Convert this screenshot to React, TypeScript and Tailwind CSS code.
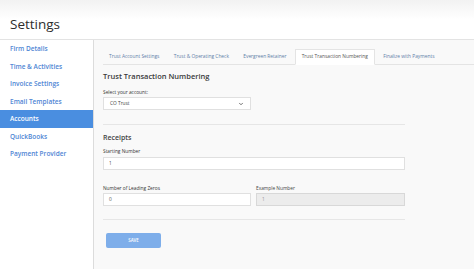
import { ChevronDown } from 'lucide-react'

const navItems = [
    'Firm Details',
    'Time & Activities',
    'Invoice Settings',
    'Email Templates',
    'Accounts',
    'QuickBooks',
    'Payment Provider',
]

const tabs = [
    'Trust Account Settings',
    'Trust & Operating Check',
    'Evergreen Retainer',
    'Trust Transaction Numbering',
    'Finalize with Payments',
]

export default function App() {
    return (
        <div className="w-[474px] h-[269px] overflow-hidden bg-white text-[#333] flex flex-col" style={{ fontFamily: '"Open Sans", "Noto Sans", sans-serif' }}>
            <header className="h-[40px] shrink-0 border-b border-[#e3e3e3] flex items-center pt-[9px] pl-[10px] bg-gradient-to-b from-[#f2f2f2] via-white to-white">
                <h1 className="text-[13.5px] leading-[18px] text-[#2d2d2d]">Settings</h1>
            </header>

            <div className="flex flex-1 min-h-0">
                <nav className="w-[94px] shrink-0 border-r border-[#dcdcdc] bg-white">
                    {navItems.map(item => (
                        <div
                            key={item}
                            className={
                                item === 'Accounts'
                                    ? 'h-[17.6px] flex items-center pl-[10px] text-[6.5px] font-semibold bg-[#4a8ee0] text-white'
                                    : 'h-[17.6px] flex items-center pl-[10px] text-[6.5px] font-semibold text-[#4f86d4]'
                            }
                        >
                            {item}
                        </div>
                    ))}
                </nav>

                <main className="flex-1 bg-[#f9f9f9] pl-[9px] pt-[9px]">
                    <div className="h-[16px] flex border-b border-[#e4e4e4]">
                        {tabs.map(tab => (
                            <div
                                key={tab}
                                className={
                                    tab === 'Trust Transaction Numbering'
                                        ? 'h-[16px] -mb-px px-[6px] mr-[2.3px] flex items-center text-[4.85px] text-[#555] bg-white border border-[#e4e4e4] border-b-white'
                                        : 'h-[16px] px-[6px] mr-[2.3px] flex items-center text-[4.85px] text-[#5f80a8]'
                                }
                            >
                                {tab}
                            </div>
                        ))}
                    </div>

                    <div className="w-[302px]">
                        <h2 className="mt-[5px] text-[7.5px] leading-[12px] font-semibold text-[#3a3a3a]">Trust Transaction Numbering</h2>
                        <div className="mt-[6px] text-[4.8px] leading-[8px] text-[#333]">Select your account:</div>
                        <div className="mt-[1px] w-[148px] h-[13px] bg-white border border-[#e0e0e0] flex items-center justify-between pl-[6px] pr-[6px]">
                            <span className="text-[4.8px] text-[#444]">CO Trust</span>
                            <ChevronDown size={6} strokeWidth={3} className="text-[#444]" />
                        </div>

                        <div className="mt-[14px] border-t border-[#e6e6e6]" />

                        <h3 className="mt-[7px] text-[7px] leading-[12px] font-semibold text-[#444]">Receipts</h3>
                        <div className="mt-[3px] text-[4.8px] leading-[8px]">Starting Number</div>
                        <div className="mt-[2px] h-[13px] bg-white border border-[#e0e0e0] flex items-center pl-[5px] text-[4.8px] text-[#555]">1</div>

                        <div className="mt-[14px] flex gap-[5px]">
                            <div className="w-[148px]">
                                <div className="text-[4.8px] leading-[8px]">Number of Leading Zeros</div>
                                <div className="mt-[1px] h-[13px] bg-white border border-[#e0e0e0] flex items-center pl-[5px] text-[4.8px] text-[#555]">0</div>
                            </div>
                            <div className="flex-1">
                                <div className="text-[4.8px] leading-[8px] text-[#444]">Example Number</div>
                                <div className="mt-[1px] h-[13px] bg-[#ececec] border border-[#d8d8d8] flex items-center pl-[5px] text-[4.8px] text-[#999]">1</div>
                            </div>
                        </div>

                        <div className="mt-[13px] border-t border-[#e6e6e6]" />

                        <button className="mt-[13px] ml-[3px] w-[55px] h-[15px] rounded-[2px] bg-[#7eaeea] text-white text-[4.4px] font-semibold flex items-center justify-center">
                            SAVE
                        </button>
                    </div>
                </main>
            </div>
        </div>
    )
}
